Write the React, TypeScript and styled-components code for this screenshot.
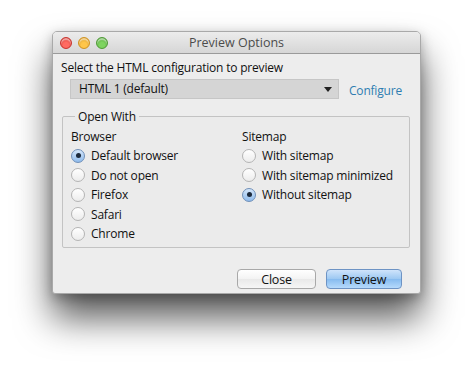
import React from "react";
import styled, { createGlobalStyle } from "styled-components";

const Global = createGlobalStyle`
  html, body { margin: 0; padding: 0; background: #ffffff; }
  body { font-family: "Open Sans", "Noto Sans", "Liberation Sans", sans-serif; letter-spacing: -0.2px; }
`;

const Page = styled.div`
  width: 474px;
  height: 367px;
  box-sizing: border-box;
  padding: 31px 0 0 52px;
  overflow: hidden;
`;

const Window = styled.div`
  width: 369px;
  height: 263px;
  box-sizing: border-box;
  background: #ededed;
  border: 1px solid #a9a9a9;
  border-radius: 5px 5px 3px 3px;
  box-shadow: 0 24px 36px rgba(0, 0, 0, 0.65), 0 4px 12px rgba(0, 0, 0, 0.25);
  display: flex;
  flex-direction: column;
  overflow: hidden;
`;

const TitleBar = styled.div`
  height: 21px;
  flex: none;
  background: linear-gradient(#ececec, #d6d6d6);
  border-bottom: 1px solid #9a9a9a;
  display: grid;
  grid-template-columns: 1fr auto 1fr;
  align-items: center;
  padding: 0 7px;
`;

const Lights = styled.div`
  display: flex;
  gap: 6px;
`;

const Light = styled.span<{ $c: string; $d: string }>`
  width: 12px;
  height: 12px;
  border-radius: 50%;
  box-sizing: border-box;
  border: 1px solid ${(p) => p.$d};
  background: radial-gradient(circle at 50% 70%, ${(p) => p.$c} 30%, ${(p) => p.$d} 100%);
  box-shadow: inset 0 2px 1px rgba(255,255,255,0.5);
`;

const Title = styled.div`
  font-size: 12.5px;
  color: #4c4c4c;
  margin-top: -1px;
  letter-spacing: 0;
`;

const Content = styled.div`
  flex: 1;
  display: flex;
  flex-direction: column;
  padding: 6px 10px 0 8px;
`;

const Label = styled.div`
  font-size: 12px;
  color: #111;
  line-height: 16px;
`;

const SelectRow = styled.div`
  display: flex;
  align-items: center;
  margin-top: 2px;
  padding-left: 9px;
  gap: 10px;
`;

const Select = styled.div`
  width: 269px;
  height: 20px;
  box-sizing: border-box;
  background: #d5d5d5;
  border: 1px solid #c6c6c6;
  display: flex;
  align-items: center;
  justify-content: space-between;
  padding: 0 6px 0 8px;
  font-size: 12px;
  color: #111;
`;

const Arrow = styled.span`
  width: 0;
  height: 0;
  border-left: 4px solid transparent;
  border-right: 4px solid transparent;
  border-top: 5px solid #222;
  margin-top: 2px;
`;

const Link = styled.span`
  font-size: 12px;
  color: #2f7db1;
  margin-top: 4px;
`;

const Group = styled.fieldset`
  margin: 9px 0 0 1px;
  padding: 4px 0 0 8px;
  width: 348px;
  height: 140px;
  box-sizing: border-box;
  border: 1px solid #c3c3c3;
  border-radius: 2px;
  background: #ebebeb;
  display: grid;
  grid-template-columns: 171px 1fr;
`;

const Legend = styled.legend`
  font-size: 12px;
  color: #111;
  padding: 0 3px;
  margin-left: 4px;
`;

const Column = styled.div`
  display: flex;
  flex-direction: column;
`;

const ColTitle = styled.div`
  font-size: 12px;
  color: #111;
  line-height: 16px;
  margin-bottom: 1px;
`;

const Option = styled.div`
  display: flex;
  align-items: center;
  gap: 6px;
  height: 19.5px;
  font-size: 12px;
  color: #111;
`;

const Radio = styled.span<{ $on?: boolean }>`
  width: 14px;
  height: 14px;
  box-sizing: border-box;
  border-radius: 50%;
  border: 1px solid ${(p) => (p.$on ? "#6f8fb8" : "#b4b4b4")};
  background: ${(p) =>
    p.$on
      ? "linear-gradient(#d4e6fa, #8fbbec)"
      : "linear-gradient(#ffffff, #ececec)"};
  display: flex;
  align-items: center;
  justify-content: center;
  flex: none;
  &::after {
    content: "";
    width: 5px;
    height: 5px;
    border-radius: 50%;
    background: #1c2a3c;
    display: ${(p) => (p.$on ? "block" : "none")};
  }
`;

const Footer = styled.div`
  display: flex;
  justify-content: flex-end;
  gap: 10px;
  margin-top: 21px;
  padding-right: 8px;
`;

const Button = styled.div<{ $primary?: boolean }>`
  width: ${(p) => (p.$primary ? "76px" : "79px")};
  height: 20px;
  box-sizing: border-box;
  border-radius: 4px;
  border: 1px solid ${(p) => (p.$primary ? "#6d93c4" : "#a8a8a8")};
  background: ${(p) =>
    p.$primary
      ? "linear-gradient(#cfe4fb, #9cc8f2 50%, #86bbef 51%, #b6dafc)"
      : "linear-gradient(#ffffff, #f3f3f3 50%, #e9e9e9 51%, #f6f6f6)"};
  display: flex;
  align-items: center;
  justify-content: center;
  font-size: 12.5px;
  color: #111;
`;

const browsers = ["Default browser", "Do not open", "Firefox", "Safari", "Chrome"];
const sitemaps = ["With sitemap", "With sitemap minimized", "Without sitemap"];

export default function App() {
  return (
    <Page>
      <Global />
      <Window>
        <TitleBar>
          <Lights>
            <Light $c="#ff6b62" $d="#c9322c" />
            <Light $c="#ffc64a" $d="#d09320" />
            <Light $c="#7ed460" $d="#4d9a34" />
          </Lights>
          <Title>Preview Options</Title>
          <span />
        </TitleBar>
        <Content>
          <Label>Select the HTML configuration to preview</Label>
          <SelectRow>
            <Select>
              <span>HTML 1 (default)</span>
              <Arrow />
            </Select>
            <Link>Configure</Link>
          </SelectRow>
          <Group>
            <Legend>Open With</Legend>
            <Column>
              <ColTitle>Browser</ColTitle>
              {browsers.map((b, i) => (
                <Option key={b}>
                  <Radio $on={i === 0} />
                  {b}
                </Option>
              ))}
            </Column>
            <Column>
              <ColTitle>Sitemap</ColTitle>
              {sitemaps.map((s, i) => (
                <Option key={s}>
                  <Radio $on={i === 2} />
                  {s}
                </Option>
              ))}
            </Column>
          </Group>
          <Footer>
            <Button>Close</Button>
            <Button $primary>Preview</Button>
          </Footer>
        </Content>
      </Window>
    </Page>
  );
}
